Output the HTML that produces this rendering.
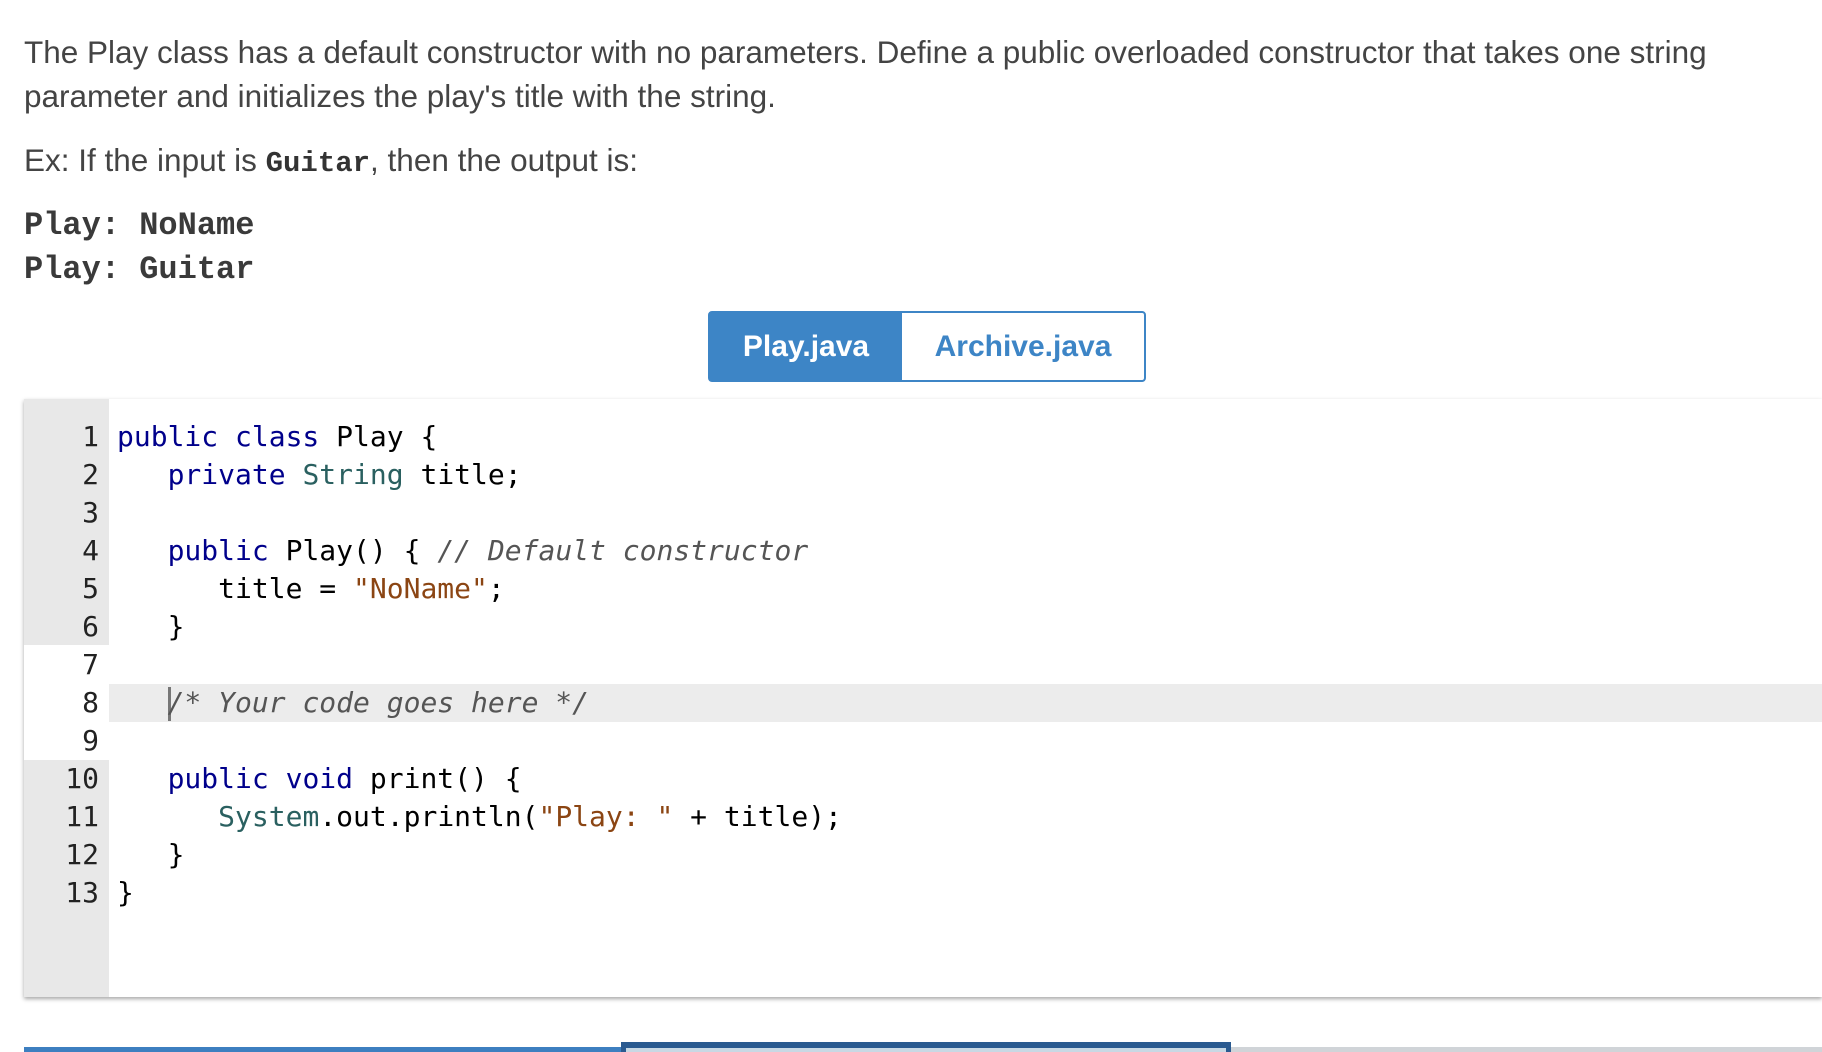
<!DOCTYPE html>
<html><head><meta charset="utf-8"><style>
body{margin:0;width:1822px;height:1052px;background:#fff;overflow:hidden;position:relative;font-family:"Liberation Sans",sans-serif;color:#444}
.p{position:absolute;left:24px;font-size:31.5px;white-space:nowrap;letter-spacing:0}
.m{font-family:"Liberation Mono",monospace;font-weight:bold;color:#333;font-size:29px}
.out{position:absolute;left:24px;font-family:"Liberation Mono",monospace;font-weight:bold;font-size:32px;color:#3a3a3a;white-space:pre}
.tabs{position:absolute;left:708px;top:311px;width:438px;height:71px;border:2px solid #3d85c6;box-sizing:border-box;border-radius:4px;display:flex;font-weight:bold;font-size:30px}
.tabs div{display:flex;align-items:center;justify-content:center}
.ed{position:absolute;left:24px;top:399px;width:1798px;height:598px;box-shadow:0 2px 4px rgba(0,0,0,.35);background:#fff}
.g{position:absolute;left:0;width:85px;background:#e8e8e8}
.code{position:absolute;left:0;top:19px;font-family:"DejaVu Sans Mono",monospace;font-size:28px;line-height:38px;white-space:pre;color:#000}
.ln{display:inline-block;width:75px;text-align:right;color:#222;margin-right:18px}
.k{color:#00008b}.t{color:#2a6060}.s{color:#8b4513}.c{color:#555;font-style:italic}
</style></head><body>
<div class="p" style="top:34px">The Play class has a default constructor with no parameters. Define a public overloaded constructor that takes one string</div>
<div class="p" style="top:78px">parameter and initializes the play's title with the string.</div>
<div class="p" style="top:142px">Ex: If the input is <span class="m">Guitar</span>, then the output is:</div>
<div class="out" style="top:207px">Play: NoName</div>
<div class="out" style="top:251px">Play: Guitar</div>
<div class="tabs"><div style="width:192px;background:#3d85c6;color:#fff">Play.java</div><div style="flex:1;color:#3d85c6">Archive.java</div></div>
<div class="ed">
<div class="g" style="top:0;height:246px"></div>
<div class="g" style="top:361px;height:237px"></div>
<div style="position:absolute;left:85px;top:285px;right:0;height:38px;background:#ececec"></div>
<div style="position:absolute;left:144px;top:288px;width:3px;height:34px;background:#777"></div>
<div class="code"><span class="ln">1</span><span class="k">public class</span> Play {
<span class="ln">2</span>   <span class="k">private</span> <span class="t">String</span> title;
<span class="ln">3</span>
<span class="ln">4</span>   <span class="k">public</span> Play() { <span class="c">// Default constructor</span>
<span class="ln">5</span>      title = <span class="s">"NoName"</span>;
<span class="ln">6</span>   }
<span class="ln">7</span>
<span class="ln">8</span>   <span class="c">/* Your code goes here */</span>
<span class="ln">9</span>
<span class="ln">10</span>   <span class="k">public void</span> print() {
<span class="ln">11</span>      <span class="t">System</span>.out.println(<span class="s">"Play: "</span> + title);
<span class="ln">12</span>   }
<span class="ln">13</span>}</div>
</div>
<div style="position:absolute;left:24px;top:1047px;width:597px;height:5px;background:#3d7fc0"></div>
<div style="position:absolute;left:621px;top:1042px;width:610px;height:10px;background:#2a5a90"></div>
<div style="position:absolute;left:626px;top:1048px;width:600px;height:4px;background:#c8d8e4"></div>
<div style="position:absolute;left:1231px;top:1047px;right:0;height:5px;background:#d0d4d8"></div>
</body></html>
